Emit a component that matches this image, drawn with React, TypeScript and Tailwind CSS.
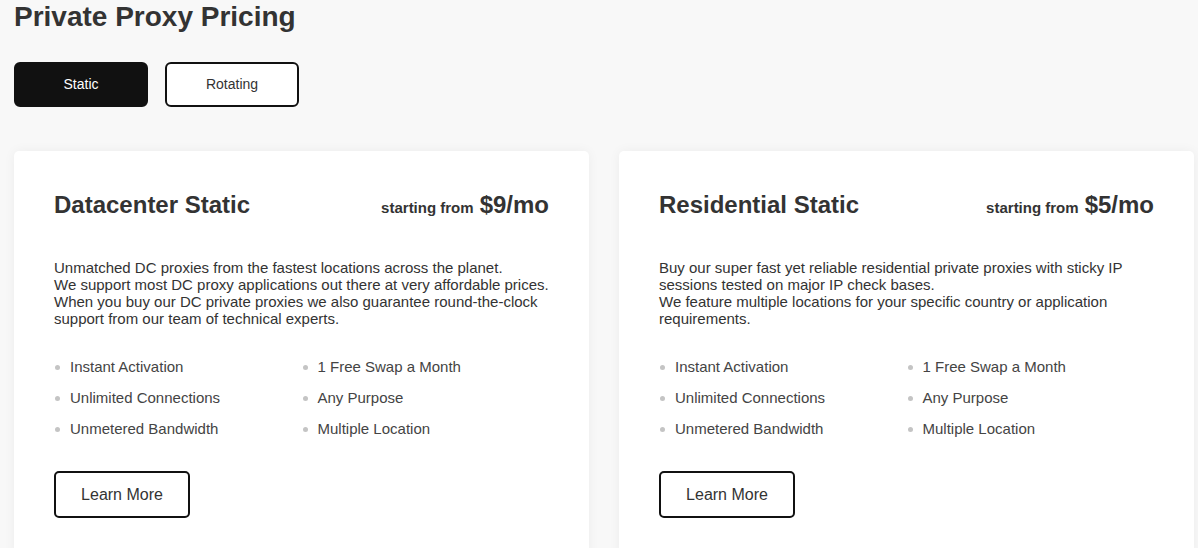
import React, { useState } from 'react';

interface Plan {
  title: string;
  price: string;
  description: string[];
}

const plans: Plan[] = [
  {
    title: 'Datacenter Static',
    price: '$9/mo',
    description: [
      'Unmatched DC proxies from the fastest locations across the planet.',
      'We support most DC proxy applications out there at very affordable prices. When you buy our DC private proxies we also guarantee round-the-clock support from our team of technical experts.',
    ],
  },
  {
    title: 'Residential Static',
    price: '$5/mo',
    description: [
      'Buy our super fast yet reliable residential private proxies with sticky IP sessions tested on major IP check bases.',
      'We feature multiple locations for your specific country or application requirements.',
    ],
  },
];

// Order follows the two-column grid: left column first row, right column first row, ...
const features = [
  'Instant Activation',
  '1 Free Swap a Month',
  'Unlimited Connections',
  'Any Purpose',
  'Unmetered Bandwidth',
  'Multiple Location',
];

const PlanCard: React.FC<{ plan: Plan }> = ({ plan }) => (
  <div className="w-[575px] shrink-0 bg-white rounded-[5px] shadow-[0_0_12px_rgba(0,0,0,0.05)] px-10 pt-[40px] pb-10">
    <div className="flex items-center justify-between h-[28px]">
      <h2 className="text-[24px] font-semibold text-[#333]">{plan.title}</h2>
      <div className="flex items-baseline gap-[6px] text-[#333] font-bold">
        <span className="text-[15px]">starting from</span>
        <span className="text-[24px]">{plan.price}</span>
      </div>
    </div>

    <div className="mt-[40px] text-[15px] leading-[17px] text-[#333]">
      {plan.description.map((line, i) => (
        <p key={i}>{line}</p>
      ))}
    </div>

    <ul className="mt-[30px] grid grid-cols-2 gap-y-[10px]">
      {features.map((f) => (
        <li key={f} className="flex items-center h-[21px] text-[15px] text-[#444]">
          <span className="w-[5px] h-[5px] rounded-full bg-[#c4c4c4] ml-[1px] mr-[10px]" />
          {f}
        </li>
      ))}
    </ul>

    <button className="mt-[31px] w-[136px] h-[47px] border-2 border-[#111] rounded-[5px] text-[16px] text-[#333] bg-white">
      Learn More
    </button>
  </div>
);

export default function App() {
  const [tab, setTab] = useState<'static' | 'rotating'>('static');

  return (
    <div className="min-h-[548px] h-[548px] overflow-hidden bg-[#f8f8f8] pl-[14px] font-['Liberation_Sans',Arial,sans-serif]">
      <h1 className="text-[28px] leading-[34px] font-bold text-[#333]">Private Proxy Pricing</h1>

      <div className="flex gap-[17px] mt-[28px]">
        <button
          onClick={() => setTab('static')}
          className={`w-[134px] h-[45px] rounded-[6px] text-[14px] border-2 border-[#111] ${
            tab === 'static' ? 'bg-[#111] text-white' : 'bg-white text-[#333]'
          }`}
        >
          Static
        </button>
        <button
          onClick={() => setTab('rotating')}
          className={`w-[134px] h-[45px] rounded-[6px] text-[14px] border-2 border-[#111] ${
            tab === 'rotating' ? 'bg-[#111] text-white' : 'bg-white text-[#333]'
          }`}
        >
          Rotating
        </button>
      </div>

      <div className="flex gap-[30px] mt-[44px]">
        {plans.map((p) => (
          <PlanCard key={p.title} plan={p} />
        ))}
      </div>
    </div>
  );
}
